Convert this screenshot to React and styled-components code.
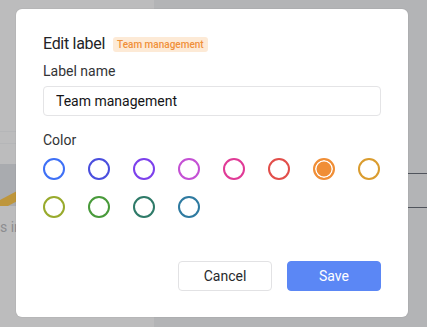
import React, { useState } from 'react';
import styled, { createGlobalStyle } from 'styled-components';

const Global = createGlobalStyle`
	html, body { margin: 0; padding: 0; }
	body {
		font-family: Roboto, "Liberation Sans", "Noto Sans", sans-serif;
		-webkit-font-smoothing: antialiased;
	}
	* { box-sizing: border-box; }
`

const Page = styled.div`
	position: relative;
	width: 427px;
	height: 327px;
	overflow: hidden;
	display: flex;
	background: rgb(179,180,182);
`

const Side = styled.div`
	width: 154px;
	background: rgb(188,188,189);
	display: flex;
	flex-direction: column;
	padding-top: 120px;
`

const Rule = styled.div`
	height: 12px;
	border-bottom: 1px solid rgb(181,182,184);
`

const Chart = styled.div`
	margin-top: 20px;
	height: 42px;
	background: rgb(169,171,175);
	position: relative;
	overflow: hidden;
`

const Band = styled.div`
	position: absolute;
	left: -10px;
	top: 26px;
	width: 60px;
	height: 9px;
	background: rgb(190,150,60);
	transform: rotate(-28deg);
`

const SideText = styled.div`
	margin-top: 13px;
	font-size: 14px;
	color: rgb(140,141,144);
`

const Main = styled.div`
	flex: 1;
	display: flex;
	flex-direction: column;
	padding-top: 173px;
	gap: 33px;
`

const Line = styled.div`
	height: 1px;
	background: rgb(80,84,92);
`

const Overlay = styled.div`
	position: absolute;
	inset: 0;
	display: flex;
	align-items: flex-start;
	justify-content: flex-start;
	padding: 9px 0 0 16px;
`

const Modal = styled.div`
	width: 392px;
	height: 308px;
	background: #fff;
	border-radius: 6px;
	box-shadow: 0 0 0 1px rgba(0,0,0,0.03);
	padding: 25px 27px 26px;
	display: flex;
	flex-direction: column;
`

const Header = styled.div`
	display: flex;
	align-items: center;
	gap: 8px;
	height: 20px;
`

const Title = styled.h2`
	margin: 0;
	font-size: 16px;
	letter-spacing: -0.3px;
	font-weight: 400;
	color: rgb(34,35,38);
	line-height: 20px;
`

const Badge = styled.span`
	font-size: 10px;
	font-weight: 500;
	color: rgb(240,144,58);
	background: rgb(253,234,214);
	border-radius: 3px;
	padding: 1px 4px;
	line-height: 13px;
`

const FieldLabel = styled.div`
	margin-top: ${p => p.$gap}px;
	font-size: 14px;
	color: rgb(50,51,54);
	line-height: 18px;
`

const Input = styled.input`
	margin-top: 6px;
	height: 30px;
	width: 100%;
	border: 1px solid rgb(228,228,230);
	border-radius: 4px;
	padding: 0 12px;
	font-family: inherit;
	font-size: 14px;
	color: rgb(20,20,22);
	outline: none;
`

const Swatches = styled.div`
	margin-top: 9px;
	display: grid;
	grid-template-columns: repeat(8, 22px);
	column-gap: 23px;
	row-gap: 16px;
`

const Swatch = styled.button`
	width: 22px;
	height: 22px;
	padding: 0;
	border-radius: 50%;
	border: 2.5px solid ${p => p.$color};
	background: ${p => p.$selected ? p.$color : '#fff'};
	box-shadow: ${p => p.$selected ? `inset 0 0 0 1.5px #fff` : 'none'};
	cursor: pointer;
`

const Footer = styled.div`
	margin-top: auto;
	display: flex;
	justify-content: flex-end;
	gap: 15px;
`

const Button = styled.button`
	width: 94px;
	height: 30px;
	border-radius: 4px;
	font-family: inherit;
	font-size: 14px;
	cursor: pointer;
	border: 1px solid ${p => p.$primary ? 'rgb(91,135,245)' : 'rgb(226,226,228)'};
	background: ${p => p.$primary ? 'rgb(91,135,245)' : '#fff'};
	color: ${p => p.$primary ? '#fff' : 'rgb(40,41,44)'};
`

const colors = [
	'rgb(62,112,246)',
	'rgb(74,78,222)',
	'rgb(124,64,236)',
	'rgb(196,80,212)',
	'rgb(224,58,150)',
	'rgb(226,78,74)',
	'rgb(240,142,54)',
	'rgb(218,156,46)',
	'rgb(152,170,44)',
	'rgb(72,154,58)',
	'rgb(46,122,104)',
	'rgb(46,122,160)',
]

export default function App() {
	const [selected, setSelected] = useState(6);
	const [name, setName] = useState('Team management');

	return (
		<Page>
			<Global />
			<Side>
				<Rule />
				<Rule />
				<Chart><Band /></Chart>
				<SideText>s in</SideText>
			</Side>
			<Main>
				<Line />
				<Line />
			</Main>
			<Overlay>
				<Modal>
					<Header>
						<Title>Edit label</Title>
						<Badge>Team management</Badge>
					</Header>
					<FieldLabel $gap={8}>Label name</FieldLabel>
					<Input value={name} onChange={e => setName(e.target.value)} />
					<FieldLabel $gap={15}>Color</FieldLabel>
					<Swatches>
						{colors.map((c, i) => (
							<Swatch key={c} $color={c} $selected={i === selected} onClick={() => setSelected(i)} />
						))}
					</Swatches>
					<Footer>
						<Button>Cancel</Button>
						<Button $primary>Save</Button>
					</Footer>
				</Modal>
			</Overlay>
		</Page>
	);
}
